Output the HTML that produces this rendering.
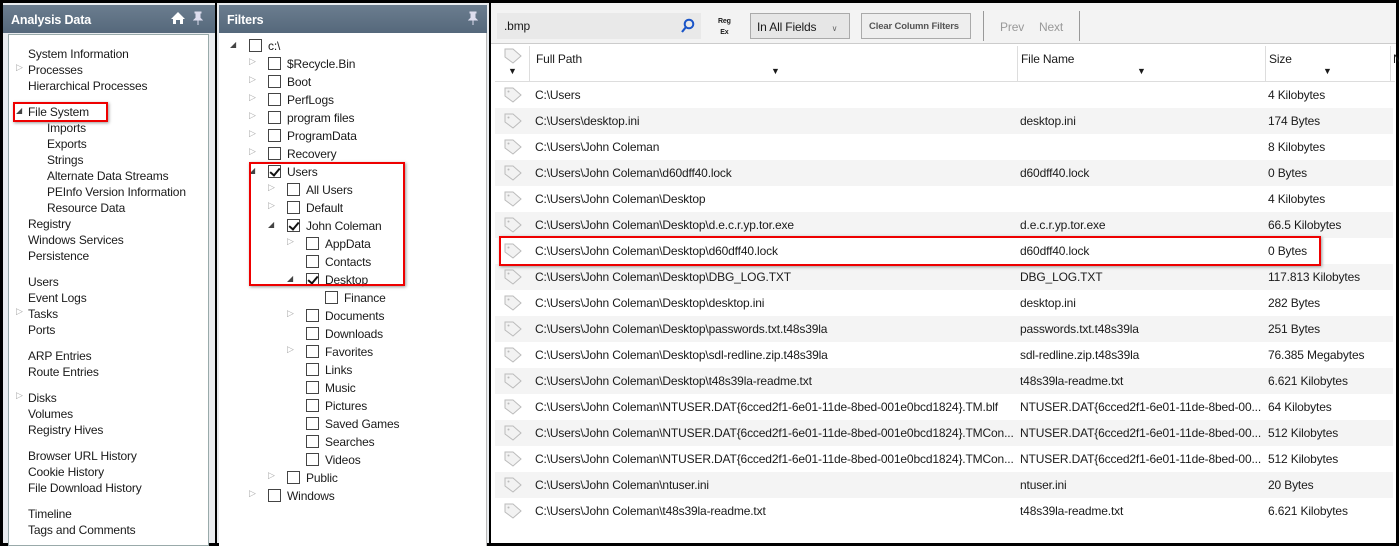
<!DOCTYPE html>
<html><head><meta charset="utf-8"><style>
*{margin:0;padding:0;box-sizing:border-box}
body{width:1399px;height:546px;background:#000;font-family:"Liberation Sans",sans-serif;font-size:12px;letter-spacing:-0.15px;color:#1a1a1a;position:relative;overflow:hidden}
.a{position:absolute;white-space:nowrap}
.hd{background:linear-gradient(#6b7d8f,#55687b);color:#fff;font-weight:bold;font-size:12.5px;padding:8px 0 0 8px}
.cb{position:absolute;width:13px;height:13px;border:1px solid #444;background:#fff}
.cb.c::after{content:"";position:absolute;left:3px;top:0px;width:4px;height:8px;border:solid #111;border-width:0 2px 2px 0;transform:rotate(40deg)}
.row{position:absolute;left:495px;width:898px;height:26px}
.tag{position:absolute;left:7px;top:3px;width:22px;height:20px}
</style></head><body>
<div class="a" style="left:3px;top:3px;width:212px;height:540px;background:#e9ecef"></div>
<div class="a hd" style="left:3px;top:5px;width:212px;height:28px">Analysis Data</div>
<svg class="a" style="left:170px;top:11px" width="16" height="14"><path d="M8 1 L15 8 L13 8 L13 13 L10 13 L10 9 L6 9 L6 13 L3 13 L3 8 L1 8 Z" fill="#fff"/></svg>
<svg class="a" style="left:193px;top:11px" width="10" height="14"><path d="M2 1 H8 V2 H7 V7 L9 9 H1 L3 7 V2 H2 Z M5 9 V14" fill="#dde" stroke="#dde"/></svg>
<div class="a" style="left:8px;top:34px;width:201px;height:512px;background:#fff;border:1px solid #9aa"></div>
<div id="left"></div>
<div class="a" style="left:217px;top:3px;width:272px;height:540px;background:#e9ecef"></div>
<div class="a hd" style="left:219px;top:5px;width:268px;height:28px">Filters</div>
<svg class="a" style="left:468px;top:11px" width="10" height="14"><path d="M2 1 H8 V2 H7 V7 L9 9 H1 L3 7 V2 H2 Z M5 9 V14" fill="#dde" stroke="#dde"/></svg>
<div class="a" style="left:219px;top:33px;width:268px;height:513px;background:#fff;border-right:1px solid #bbb"></div>
<div id="tree"></div>
<div class="a" style="left:491px;top:3px;width:905px;height:540px;background:#fff"></div>
<div class="a" style="left:491px;top:3px;width:905px;height:41px;background:#f3f3f3;border-bottom:1px solid #ccc"></div>
<div class="a" style="left:497px;top:13px;width:204px;height:26px;background:#e9e9e9;padding:6px 0 0 7px">.bmp</div>
<svg class="a" style="left:680px;top:18px" width="16" height="16"><circle cx="9" cy="6" r="4.3" fill="none" stroke="#1a55c8" stroke-width="2"/><line x1="6" y1="9" x2="2" y2="14" stroke="#1a55c8" stroke-width="2.2"/></svg>
<div class="a" style="left:718px;top:16px;font-size:7px;font-weight:bold;line-height:11px;text-align:center">Reg<br>Ex</div>
<div class="a" style="left:750px;top:13px;width:100px;height:26px;background:#e6e6e6;border:1px solid #aaa;padding:6px 0 0 6px">In All Fields <span style="font-size:8px;margin-left:12px;color:#666">&#8744;</span></div>
<div class="a" style="left:861px;top:13px;width:110px;height:26px;background:#eee;border:1px solid #aaa;padding:7px 0 0 7px;font-size:9.5px;font-weight:bold;color:#555">Clear Column Filters</div>
<div class="a" style="left:983px;top:11px;width:1px;height:30px;background:#999"></div>
<div class="a" style="left:1000px;top:20px;color:#999">Prev</div>
<div class="a" style="left:1039px;top:20px;color:#999">Next</div>
<div class="a" style="left:1079px;top:11px;width:1px;height:30px;background:#999"></div>
<div class="a" style="left:495px;top:46px;width:900px;height:36px;background:#fff;border-bottom:1px solid #ddd"></div>
<div class="a" style="left:529px;top:46px;width:1px;height:36px;background:#ddd"></div>
<div class="a" style="left:1017px;top:46px;width:1px;height:36px;background:#ddd"></div>
<div class="a" style="left:1265px;top:46px;width:1px;height:36px;background:#ddd"></div>
<div class="a" style="left:1390px;top:46px;width:1px;height:36px;background:#ddd"></div>
<div class="a" style="left:536px;top:52px">Full Path</div>
<div class="a" style="left:1021px;top:52px">File Name</div>
<div class="a" style="left:1269px;top:52px">Size</div>
<div class="a" style="left:1393px;top:52px">N</div>
<div class="a" style="left:508px;top:66px;font-size:9px">&#9660;</div>
<div class="a" style="left:771px;top:66px;font-size:9px">&#9660;</div>
<div class="a" style="left:1137px;top:66px;font-size:9px">&#9660;</div>
<div class="a" style="left:1323px;top:66px;font-size:9px">&#9660;</div>
<svg class="a" style="left:502px;top:47px" width="22" height="18"><path d="M3 2 L11 2 L19 9 L11 16 L3 10 Z" fill="#f2f2f2" stroke="#bbb"/></svg>
<div id="rows"></div>
<div class="a" style="left:499px;top:236px;width:822px;height:30px;border:2px solid #e00;box-shadow:1px 1px 3px #999"></div>
<div class="a" style="left:13px;top:102px;width:95px;height:20px;border:2px solid #e00;box-shadow:1px 1px 3px #999"></div>
<div class="a" style="left:249px;top:162px;width:156px;height:124px;border:2px solid #e00;box-shadow:1px 1px 3px #999"></div>
<script>
function T(x,y,t,w){return `<div class="a" style="left:${x}px;top:${y}px${w?';width:'+w+'px;overflow:hidden':''}">${t}</div>`}
let h="";
const L=[[54,"System Information"],[70,"Processes",1],[86,"Hierarchical Processes"],[112,"File System",2],[128,"Imports",0,1],[144,"Exports",0,1],[160,"Strings",0,1],[176,"Alternate Data Streams",0,1],[192,"PEInfo Version Information",0,1],[208,"Resource Data",0,1],[224,"Registry"],[240,"Windows Services"],[256,"Persistence"],[282,"Users"],[298,"Event Logs"],[314,"Tasks",1],[330,"Ports"],[356,"ARP Entries"],[372,"Route Entries"],[398,"Disks",1],[414,"Volumes"],[430,"Registry Hives"],[456,"Browser URL History"],[472,"Cookie History"],[488,"File Download History"],[514,"Timeline"],[530,"Tags and Comments"]];
for(const [y,t,e,s] of L){h+=T(s?47:28,y-7,t);if(e==1)h+=`<div class="a" style="left:16px;top:${y-8}px;color:#aaa;font-size:9px">&#9655;</div>`;if(e==2)h+=`<div class="a" style="left:16px;top:${y-6}px;color:#444;font-size:8px">&#9698;</div>`}
document.getElementById('left').innerHTML=h;
h="";
const F=[[45,0,"c:\\",2],[63,1,"$Recycle.Bin",1],[81,1,"Boot",1],[99,1,"PerfLogs",1],[117,1,"program files",1],[135,1,"ProgramData",1],[153,1,"Recovery",1],[171,1,"Users",2,1],[189,2,"All Users",1],[207,2,"Default",1],[225,2,"John Coleman",2,1],[243,3,"AppData",1],[261,3,"Contacts"],[279,3,"Desktop",2,1],[297,4,"Finance"],[315,3,"Documents",1],[333,3,"Downloads"],[351,3,"Favorites",1],[369,3,"Links"],[387,3,"Music"],[405,3,"Pictures"],[423,3,"Saved Games"],[441,3,"Searches"],[459,3,"Videos"],[477,2,"Public",1],[495,1,"Windows",1]];
for(const [y,l,t,e,c] of F){const x=249+l*19;h+=`<div class="cb${c?' c':''}" style="left:${x}px;top:${y-6}px"></div>`+T(x+19,y-6,t);
if(e==1)h+=`<div class="a" style="left:${x-19}px;top:${y-7}px;color:#aaa;font-size:9px">&#9655;</div>`;
if(e==2)h+=`<div class="a" style="left:${x-19}px;top:${y-5}px;color:#444;font-size:8px">&#9698;</div>`}
document.getElementById('tree').innerHTML=h;
h="";
const R=[["C:\\Users","","4 Kilobytes"],["C:\\Users\\desktop.ini","desktop.ini","174 Bytes"],["C:\\Users\\John Coleman","","8 Kilobytes"],["C:\\Users\\John Coleman\\d60dff40.lock","d60dff40.lock","0 Bytes"],["C:\\Users\\John Coleman\\Desktop","","4 Kilobytes"],["C:\\Users\\John Coleman\\Desktop\\d.e.c.r.yp.tor.exe","d.e.c.r.yp.tor.exe","66.5 Kilobytes"],["C:\\Users\\John Coleman\\Desktop\\d60dff40.lock","d60dff40.lock","0 Bytes"],["C:\\Users\\John Coleman\\Desktop\\DBG_LOG.TXT","DBG_LOG.TXT","117.813 Kilobytes"],["C:\\Users\\John Coleman\\Desktop\\desktop.ini","desktop.ini","282 Bytes"],["C:\\Users\\John Coleman\\Desktop\\passwords.txt.t48s39la","passwords.txt.t48s39la","251 Bytes"],["C:\\Users\\John Coleman\\Desktop\\sdl-redline.zip.t48s39la","sdl-redline.zip.t48s39la","76.385 Megabytes"],["C:\\Users\\John Coleman\\Desktop\\t48s39la-readme.txt","t48s39la-readme.txt","6.621 Kilobytes"],["C:\\Users\\John Coleman\\NTUSER.DAT{6cced2f1-6e01-11de-8bed-001e0bcd1824}.TM.blf","NTUSER.DAT{6cced2f1-6e01-11de-8bed-00...","64 Kilobytes"],["C:\\Users\\John Coleman\\NTUSER.DAT{6cced2f1-6e01-11de-8bed-001e0bcd1824}.TMCon...","NTUSER.DAT{6cced2f1-6e01-11de-8bed-00...","512 Kilobytes"],["C:\\Users\\John Coleman\\NTUSER.DAT{6cced2f1-6e01-11de-8bed-001e0bcd1824}.TMCon...","NTUSER.DAT{6cced2f1-6e01-11de-8bed-00...","512 Kilobytes"],["C:\\Users\\John Coleman\\ntuser.ini","ntuser.ini","20 Bytes"],["C:\\Users\\John Coleman\\t48s39la-readme.txt","t48s39la-readme.txt","6.621 Kilobytes"]];
R.forEach((r,i)=>{const y=82+i*26;h+=`<div class="row" style="top:${y}px;background:${i%2?'#f4f4f4':'#fff'}"><svg class="tag" width="22" height="20"><path d="M3 3 L11 3 L19 10 L11 17 L3 11 Z" fill="#f2f2f2" stroke="#bbb"/><circle cx="6.5" cy="6.5" r="1" fill="#bbb"/></svg></div>`+T(535,y+6,r[0],478)+T(1020,y+6,r[1],242)+T(1268,y+6,r[2])});
document.getElementById('rows').innerHTML=h;
</script>
</body></html>
